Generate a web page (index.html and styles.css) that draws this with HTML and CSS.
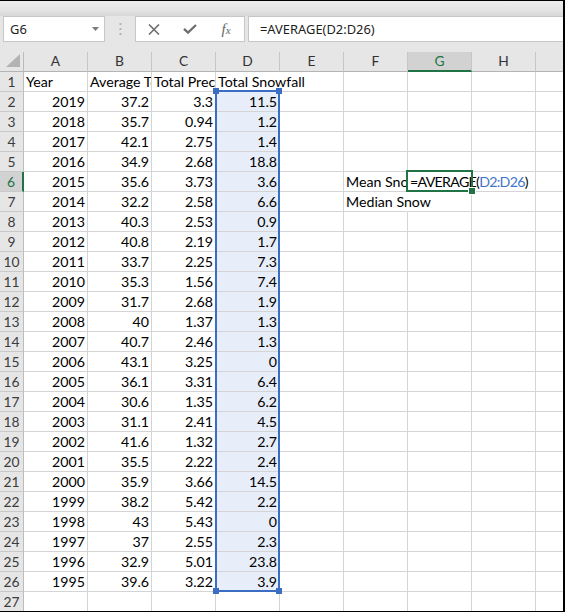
FILE: index.html
```html
<!DOCTYPE html>
<html lang="en">
<head>
<meta charset="utf-8">
<title>Sheet</title>
<link rel="stylesheet" href="styles.css">
</head>
<body>
<div class="frame">
  <div class="toolbar">
    <div class="namebox">
      <span class="ref">G6</span>
      <svg class="dd" width="7" height="4" viewBox="0 0 7 4"><path d="M0 0H7L3.5 4Z" fill="#7a7a7a"/></svg>
    </div>
    <div class="grip">
      <svg width="3" height="12" viewBox="0 0 3 12"><rect x="0.5" y="0" width="2" height="2" fill="#b4b4b4"/><rect x="0.5" y="5" width="2" height="2" fill="#b4b4b4"/><rect x="0.5" y="10" width="2" height="2" fill="#b4b4b4"/></svg>
    </div>
    <div class="fxbox">
      <span class="btn"><svg width="12" height="11" viewBox="0 0 12 11"><path d="M1 0.5L11 10.5M11 0.5L1 10.5" stroke="#6e6e6e" stroke-width="1.6" fill="none"/></svg></span>
      <span class="btn"><svg width="14" height="10" viewBox="0 0 14 10"><path d="M1 4.8L5 8.6L13 1" stroke="#6e6e6e" stroke-width="2.3" fill="none"/></svg></span>
      <span class="btn fx"><i>f</i><i class="sub">x</i></span>
    </div>
    <div class="formula">=AVERAGE(D2:D26)</div>
  </div>

  <div class="sheet">
    <div class="row hdr">
      <div class="corner"><svg width="14" height="13" viewBox="0 0 14 13"><path d="M14 0V13H0Z" fill="#b3b3b3"/></svg></div>
      <div class="ch">A</div><div class="ch">B</div><div class="ch">C</div><div class="ch">D</div><div class="ch">E</div><div class="ch">F</div><div class="ch on">G</div><div class="ch">H</div><div class="ch last"></div>
    </div>
    <div class="row"><div class="rh">1</div><div>Year</div><div>Average Temp</div><div>Total Precip</div><div class="ovf">Total Snowfall</div><div></div><div></div><div></div><div></div><div class="last"></div></div>
    <div class="row"><div class="rh">2</div><div class="n">2019</div><div class="n">37.2</div><div class="n">3.3</div><div class="n sel">11.5</div><div></div><div></div><div></div><div></div><div class="last"></div></div>
    <div class="row"><div class="rh">3</div><div class="n">2018</div><div class="n">35.7</div><div class="n">0.94</div><div class="n sel">1.2</div><div></div><div></div><div></div><div></div><div class="last"></div></div>
    <div class="row"><div class="rh">4</div><div class="n">2017</div><div class="n">42.1</div><div class="n">2.75</div><div class="n sel">1.4</div><div></div><div></div><div></div><div></div><div class="last"></div></div>
    <div class="row"><div class="rh">5</div><div class="n">2016</div><div class="n">34.9</div><div class="n">2.68</div><div class="n sel">18.8</div><div></div><div></div><div></div><div></div><div class="last"></div></div>
    <div class="row"><div class="rh on">6</div><div class="n">2015</div><div class="n">35.6</div><div class="n">3.73</div><div class="n sel">3.6</div><div></div><div>Mean Snow</div><div class="ovf act">=AVERAGE(<span class="rf">D2:D26</span>)</div><div></div><div class="last"></div></div>
    <div class="row"><div class="rh">7</div><div class="n">2014</div><div class="n">32.2</div><div class="n">2.58</div><div class="n sel">6.6</div><div></div><div class="ovf">Median Snow</div><div></div><div></div><div class="last"></div></div>
    <div class="row"><div class="rh">8</div><div class="n">2013</div><div class="n">40.3</div><div class="n">2.53</div><div class="n sel">0.9</div><div></div><div></div><div></div><div></div><div class="last"></div></div>
    <div class="row"><div class="rh">9</div><div class="n">2012</div><div class="n">40.8</div><div class="n">2.19</div><div class="n sel">1.7</div><div></div><div></div><div></div><div></div><div class="last"></div></div>
    <div class="row"><div class="rh">10</div><div class="n">2011</div><div class="n">33.7</div><div class="n">2.25</div><div class="n sel">7.3</div><div></div><div></div><div></div><div></div><div class="last"></div></div>
    <div class="row"><div class="rh">11</div><div class="n">2010</div><div class="n">35.3</div><div class="n">1.56</div><div class="n sel">7.4</div><div></div><div></div><div></div><div></div><div class="last"></div></div>
    <div class="row"><div class="rh">12</div><div class="n">2009</div><div class="n">31.7</div><div class="n">2.68</div><div class="n sel">1.9</div><div></div><div></div><div></div><div></div><div class="last"></div></div>
    <div class="row"><div class="rh">13</div><div class="n">2008</div><div class="n">40</div><div class="n">1.37</div><div class="n sel">1.3</div><div></div><div></div><div></div><div></div><div class="last"></div></div>
    <div class="row"><div class="rh">14</div><div class="n">2007</div><div class="n">40.7</div><div class="n">2.46</div><div class="n sel">1.3</div><div></div><div></div><div></div><div></div><div class="last"></div></div>
    <div class="row"><div class="rh">15</div><div class="n">2006</div><div class="n">43.1</div><div class="n">3.25</div><div class="n sel">0</div><div></div><div></div><div></div><div></div><div class="last"></div></div>
    <div class="row"><div class="rh">16</div><div class="n">2005</div><div class="n">36.1</div><div class="n">3.31</div><div class="n sel">6.4</div><div></div><div></div><div></div><div></div><div class="last"></div></div>
    <div class="row"><div class="rh">17</div><div class="n">2004</div><div class="n">30.6</div><div class="n">1.35</div><div class="n sel">6.2</div><div></div><div></div><div></div><div></div><div class="last"></div></div>
    <div class="row"><div class="rh">18</div><div class="n">2003</div><div class="n">31.1</div><div class="n">2.41</div><div class="n sel">4.5</div><div></div><div></div><div></div><div></div><div class="last"></div></div>
    <div class="row"><div class="rh">19</div><div class="n">2002</div><div class="n">41.6</div><div class="n">1.32</div><div class="n sel">2.7</div><div></div><div></div><div></div><div></div><div class="last"></div></div>
    <div class="row"><div class="rh">20</div><div class="n">2001</div><div class="n">35.5</div><div class="n">2.22</div><div class="n sel">2.4</div><div></div><div></div><div></div><div></div><div class="last"></div></div>
    <div class="row"><div class="rh">21</div><div class="n">2000</div><div class="n">35.9</div><div class="n">3.66</div><div class="n sel">14.5</div><div></div><div></div><div></div><div></div><div class="last"></div></div>
    <div class="row"><div class="rh">22</div><div class="n">1999</div><div class="n">38.2</div><div class="n">5.42</div><div class="n sel">2.2</div><div></div><div></div><div></div><div></div><div class="last"></div></div>
    <div class="row"><div class="rh">23</div><div class="n">1998</div><div class="n">43</div><div class="n">5.43</div><div class="n sel">0</div><div></div><div></div><div></div><div></div><div class="last"></div></div>
    <div class="row"><div class="rh">24</div><div class="n">1997</div><div class="n">37</div><div class="n">2.55</div><div class="n sel">2.3</div><div></div><div></div><div></div><div></div><div class="last"></div></div>
    <div class="row"><div class="rh">25</div><div class="n">1996</div><div class="n">32.9</div><div class="n">5.01</div><div class="n sel">23.8</div><div></div><div></div><div></div><div></div><div class="last"></div></div>
    <div class="row"><div class="rh">26</div><div class="n">1995</div><div class="n">39.6</div><div class="n">3.22</div><div class="n sel">3.9</div><div></div><div></div><div></div><div></div><div class="last"></div></div>
    <div class="row"><div class="rh">27</div><div></div><div></div><div></div><div></div><div></div><div></div><div></div><div></div><div class="last"></div></div>

    <div class="refbox"><i class="hd tl"></i><i class="hd tr"></i><i class="hd bl"></i><i class="hd br"></i></div>
    <div class="active"><i class="handle"></i></div>
  </div>
</div>
</body>
</html>
```
FILE: styles.css
```css
* { box-sizing: border-box; }
html, body { margin: 0; padding: 0; background: #fff; }
body { width: 565px; height: 612px; overflow: hidden; }

.frame {
  width: 565px;
  height: 612px;
  border-top: 1px solid #000;
  border-right: 2px solid #000;
  border-bottom: 1px solid #000;
  overflow: hidden;
  display: flex;
  flex-direction: column;
}

/* ---------- formula bar ---------- */
.toolbar {
  height: 51px;
  flex: none;
  display: flex;
  align-items: flex-start;
  padding: 15px 0 10px 3px;
  background: linear-gradient(to bottom, #ececec 0px, #e4e4e4 9px, #d8d8d8 15px, #e6e6e6 15px);
  font-family: "Noto Sans", "Open Sans", sans-serif;
  font-size: 12.9px;
  color: #1e1e1e;
}
.namebox {
  width: 102px;
  height: 26px;
  background: #fff;
  border: 1px solid #c6c6c6;
  display: flex;
  align-items: center;
  padding-left: 6px;
}
.namebox .ref { line-height: 24px; }
.namebox .dd { margin-left: auto; margin-right: 5px; }
.grip {
  width: 30px;
  height: 26px;
  display: flex;
  align-items: center;
  justify-content: center;
  padding-bottom: 1px;
}
.fxbox {
  width: 110px;
  height: 26px;
  background: #fff;
  border: 1px solid #c6c6c6;
  display: grid;
  grid-template-columns: repeat(3, 36px);
  align-items: center;
}
.btn {
  display: flex;
  justify-content: center;
  align-items: center;
  height: 24px;
}
.fx {
  font-family: "Liberation Serif", "DejaVu Serif", serif;
  color: #666;
  font-size: 15px;
  line-height: 24px;
  padding-bottom: 1px;
}
.fx .sub { font-size: 11px; position: relative; top: 1px; }
.formula {
  flex: 1;
  height: 26px;
  margin-left: 3px;
  background: #fff;
  border: 1px solid #c6c6c6;
  border-right: none;
  padding-left: 11px;
  line-height: 24px;
}

/* ---------- grid ---------- */
.sheet {
  position: relative;
  flex: none;
  font-family: Lato, "Liberation Sans", sans-serif;
  font-size: 14.2px;
  color: #000;
}
.row {
  display: grid;
  grid-template-columns: 24px repeat(8, 64px) minmax(0, 1fr);
  height: 20px;
}
.row > div {
  border-right: 1px solid #d4d4d4;
  border-bottom: 1px solid #d4d4d4;
  padding: 0 2px;
  line-height: 19px;
  white-space: nowrap;
  overflow: hidden;
}
.row > div.last { border-right: none; }
.n { text-align: right; }
.sel { background: #e8eef9; }
.ovf {
  overflow: visible !important;
  border-right-color: transparent !important;
  position: relative;
  z-index: 1;
}
.act { padding-left: 2px !important; letter-spacing: -0.7px; }
.rf { color: #3f76cc; }

.row > .rh {
  background: #e6e6e6;
  border-right-color: #bcbcbc;
  border-bottom-color: #c9c9c9;
  text-align: center;
  color: #3c3c3c;
  padding: 0;
  font-size: 13.8px;
}
.row > .rh.on {
  background: #d2d2d2;
  border-right: 2px solid #217346;
  color: #217346;
}
.hdr > div {
  background: #e6e6e6;
  border-right-color: #c6c6c6;
  border-bottom-color: #b4b4b4;
  text-align: center;
  color: #333;
  line-height: 17px;
  font-size: 13.8px;
}
.hdr > .ch.on {
  background: #d2d2d2;
  border-bottom: 2px solid #217346;
  color: #217346;
}
.hdr > .corner {
  display: flex;
  align-items: flex-end;
  justify-content: flex-end;
  padding: 0 3px 4px 0;
  border-right-color: #bcbcbc;
}

/* reference highlight D2:D26 */
.refbox {
  position: absolute;
  left: 215px;
  top: 38px;
  width: 65px;
  height: 502px;
  border: 2px solid #3b6dc3;
  z-index: 3;
}
.hd {
  position: absolute;
  width: 6px;
  height: 6px;
  background: #3b6dc3;
}
.hd.tl { left: -4px; top: -4px; }
.hd.tr { right: -4px; top: -4px; }
.hd.bl { left: -4px; bottom: -4px; }
.hd.br { right: -4px; bottom: -4px; }

/* active cell G6 */
.active {
  position: absolute;
  left: 406px;
  top: 118px;
  width: 67px;
  height: 22px;
  border: 2px solid #217346;
  z-index: 3;
}
.handle {
  position: absolute;
  right: -5px;
  bottom: -5px;
  width: 6px;
  height: 6px;
  background: #217346;
  border: 1px solid #fff;
  box-sizing: content-box;
}
```
